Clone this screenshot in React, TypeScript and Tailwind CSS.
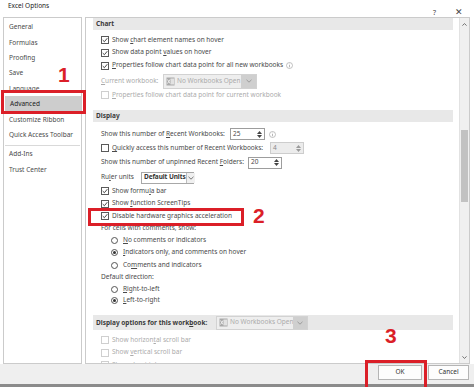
import React from "react";

type P = { h: string; checked?: boolean; disabled?: boolean; children: React.ReactNode };

function Box({ checked, disabled }: { checked?: boolean; disabled?: boolean }) {
  return (
    <span
      className={`w-[8px] h-[8px] shrink-0 border bg-white flex items-center justify-center ${
        disabled ? "border-[#cfcfcf]" : "border-[#5a5a5a]"
      }`}
    >
      {checked && (
        <svg width="6" height="6" viewBox="0 0 6 6">
          <path d="M0.7 3.1 L2.4 4.7 L5.3 1.2" stroke="#333" strokeWidth="0.9" fill="none" />
        </svg>
      )}
    </span>
  );
}

function CheckRow({ h, checked, disabled, children }: P) {
  return (
    <div
      className={`${h} shrink-0 flex items-center pl-[15px] gap-[3px] whitespace-nowrap ${
        disabled ? "text-[#ababab]" : ""
      }`}
    >
      <Box checked={checked} disabled={disabled} />
      <span className="leading-none">{children}</span>
    </div>
  );
}

function Radio({ h, on, children }: { h: string; on?: boolean; children: React.ReactNode }) {
  return (
    <div className={`${h} shrink-0 flex items-center pl-[25px] gap-[5px] whitespace-nowrap`}>
      <span className="w-[7px] h-[7px] shrink-0 rounded-full border border-[#555] bg-white flex items-center justify-center">
        {on && <span className="w-[3px] h-[3px] rounded-full bg-[#333]" />}
      </span>
      <span className="leading-none">{children}</span>
    </div>
  );
}

function Info() {
  return (
    <svg width="7" height="7" viewBox="0 0 7 7" className="shrink-0">
      <circle cx="3.5" cy="3.5" r="3" fill="none" stroke="#9a9a9a" strokeWidth="0.6" />
      <line x1="3.5" y1="3" x2="3.5" y2="5.3" stroke="#9a9a9a" strokeWidth="0.7" />
      <circle cx="3.5" cy="1.9" r="0.45" fill="#9a9a9a" />
    </svg>
  );
}

function XlIcon() {
  return (
    <svg width="9" height="9" viewBox="0 0 9 9" className="shrink-0">
      <rect x="0.5" y="0.5" width="8" height="8" fill="#a9a9a9" />
      <rect x="4.5" y="1.5" width="3.5" height="6" fill="#e2e2e2" />
      <path d="M1.5 2.5 L4 6.5 M4 2.5 L1.5 6.5" stroke="#f4f4f4" strokeWidth="0.9" />
    </svg>
  );
}

function Spin({ value, w, disabled }: { value: string; w: string; disabled?: boolean }) {
  return (
    <div
      className={`${w} h-[12px] shrink-0 border flex items-stretch ${
        disabled ? "border-[#cdcdcd] bg-[#ececec] text-[#8a8a8a]" : "border-[#9d9d9d] bg-white"
      }`}
    >
      <span className="flex-1 pl-[2px] flex items-center leading-none">{value}</span>
      <span className="w-[9px] flex flex-col items-center justify-center gap-[1px]">
        <svg width="5" height="3" viewBox="0 0 5 3">
          <path d="M0 3 L2.5 0 L5 3 Z" fill={disabled ? "#9a9a9a" : "#444"} />
        </svg>
        <svg width="5" height="3" viewBox="0 0 5 3">
          <path d="M0 0 L2.5 3 L5 0 Z" fill={disabled ? "#9a9a9a" : "#444"} />
        </svg>
      </span>
    </div>
  );
}

function Chevron({ color = "#555" }: { color?: string }) {
  return (
    <svg width="6" height="4" viewBox="0 0 6 4">
      <path d="M0.5 0.8 L3 3.2 L5.5 0.8" stroke={color} strokeWidth="0.8" fill="none" />
    </svg>
  );
}

function Header({ h, children }: { h: string; children: React.ReactNode }) {
  return (
    <div
      className={`${h} shrink-0 ml-[7px] mr-[6px] bg-[#e8e8e8] flex items-center pl-[3px] font-bold text-[#3a3a3a] whitespace-nowrap`}
    >
      {children}
    </div>
  );
}

const navItems = [
  "General",
  "Formulas",
  "Proofing",
  "Save",
  "Language",
  "Advanced",
  "Customize Ribbon",
  "Quick Access Toolbar",
];

export default function App() {
  return (
    <div className="w-[474px] h-[387px] bg-white relative overflow-hidden flex flex-col font-['Noto_Sans',sans-serif] text-[6.5px] text-[#4a4a4a]">
      {/* title bar */}
      <div className="h-[17px] shrink-0 flex">
        <div className="pl-[8px] pt-[1px] leading-[9px] text-[#222]">Excel Options</div>
        <div className="ml-auto flex items-end pb-[1px] gap-[19px] pr-[11px] text-[#444]">
          <span className="text-[7px] leading-none">?</span>
          <span className="text-[9px] leading-none">✕</span>
        </div>
      </div>

      {/* body */}
      <div className="h-[347px] shrink-0 flex pl-[3px] gap-[3px]">
        {/* nav */}
        <div className="w-[79px] border border-[#cbcbcb] bg-white flex flex-col pt-[1.5px] text-[#4a4a4a]">
          {navItems.map((n) => (
            <div
              key={n}
              className={`h-[15.4px] shrink-0 flex items-center pl-[5px] whitespace-nowrap ${
                n === "Advanced" ? "bg-[#cdcdcd] ml-[1px] pl-[4px] text-[#222]" : ""
              }`}
            >
              {n}
            </div>
          ))}
          <div className="mt-[2px] mb-[1px] mx-[1px] h-[1px] shrink-0 bg-[#d9d9d9]" />
          <div className="h-[15.4px] shrink-0 flex items-center pl-[5px]">Add-Ins</div>
          <div className="h-[15.4px] shrink-0 flex items-center pl-[5px]">Trust Center</div>
        </div>

        {/* options */}
        <div className="w-[385px] border border-[#cbcbcb] bg-white flex">
          <div className="flex-1 overflow-hidden flex flex-col">
            <Header h="h-[12px]">Chart</Header>
            <div className="h-[4px] shrink-0" />
            <CheckRow h="h-[12px]" checked>
              Show <u>c</u>hart element names on hover
            </CheckRow>
            <CheckRow h="h-[13px]" checked>
              Show data point <u>v</u>alues on hover
            </CheckRow>
            <div className="h-[13px] shrink-0 flex items-center pl-[15px] gap-[3px] whitespace-nowrap">
              <Box checked />
              <span className="leading-none">
                <u>P</u>roperties follow chart data point for all new workbooks
              </span>
              <Info />
            </div>
            <div className="h-[1px] shrink-0" />
            <div className="h-[16px] shrink-0 flex items-center pl-[15px] whitespace-nowrap text-[#ababab]">
              <span className="w-[62px] leading-none">
                <u>C</u>urrent workbook:
              </span>
              <div className="w-[94px] h-[15px] border border-[#d2d2d2] bg-[#eeeeee] flex items-center">
                <span className="pl-[2px] pr-[2px]">
                  <XlIcon />
                </span>
                <span className="flex-1 leading-none">No Workbooks Open</span>
                <span className="w-[15px] h-full bg-[#cfcfcf] flex items-center justify-center">
                  <Chevron color="#8e8e8e" />
                </span>
              </div>
            </div>
            <CheckRow h="h-[12px]" disabled>
              <u>P</u>roperties follow chart data point for current workbook
            </CheckRow>

            <div className="h-[9px] shrink-0" />
            <Header h="h-[12px]">Display</Header>
            <div className="h-[5px] shrink-0" />
            <div className="h-[14px] shrink-0 flex items-center pl-[15px] whitespace-nowrap">
              <span className="w-[129px] leading-none">
                Show this number of <u>R</u>ecent Workbooks:
              </span>
              <Spin value="25" w="w-[35px]" />
              <span className="ml-[4px]">
                <Info />
              </span>
            </div>
            <div className="h-[14px] shrink-0 flex items-center pl-[15px] gap-[3px] whitespace-nowrap">
              <Box />
              <span className="w-[155px] leading-none">
                <u>Q</u>uickly access this number of Recent Workbooks:
              </span>
              <Spin value="4" w="w-[34px]" disabled />
            </div>
            <div className="h-[15px] shrink-0 flex items-center pl-[15px] whitespace-nowrap">
              <span className="w-[147px] leading-none">
                Show this number of unpinned Recent <u>F</u>olders:
              </span>
              <Spin value="20" w="w-[34px]" />
            </div>
            <div className="h-[15px] shrink-0 flex items-center pl-[15px] whitespace-nowrap">
              <span className="w-[40px] leading-none">
                Ru<u>l</u>er units
              </span>
              <div className="w-[53px] h-[12px] border border-[#a8a8a8] bg-white flex items-center">
                <span className="flex-1 pl-[2px] font-bold leading-none text-[#333] tracking-[-0.1px]">
                  Default Units
                </span>
                <span className="w-[9px] h-full shrink-0 border-l border-[#bdbdbd] bg-[#f0f0f0] flex items-center justify-center">
                  <Chevron />
                </span>
              </div>
            </div>
            <CheckRow h="h-[12px]" checked>
              Show formu<u>l</u>a bar
            </CheckRow>
            <CheckRow h="h-[13px]" checked>
              Show <u>f</u>unction ScreenTips
            </CheckRow>
            <CheckRow h="h-[12px]" checked>
              Disable hardware <u>g</u>raphics acceleration
            </CheckRow>
            <div className="h-[12px] shrink-0 flex items-center pl-[15px] whitespace-nowrap leading-none">
              For cells with comments, show:
            </div>
            <Radio h="h-[12px]">
              <u>N</u>o comments or indicators
            </Radio>
            <Radio h="h-[13px]" on>
              <u>I</u>ndicators only, and comments on hover
            </Radio>
            <Radio h="h-[12px]">
              Co<u>m</u>ments and indicators
            </Radio>
            <div className="h-[12px] shrink-0 flex items-center pl-[15px] whitespace-nowrap leading-none">
              Default direction:
            </div>
            <Radio h="h-[12px]">
              <u>R</u>ight-to-left
            </Radio>
            <Radio h="h-[11px]" on>
              <u>L</u>eft-to-right
            </Radio>

            <div className="h-[9px] shrink-0" />
            <Header h="h-[15px]">
              <span className="w-[120px]">
                Display options for this work<u>b</u>ook:
              </span>
              <div className="w-[92px] h-[14px] border border-[#d2d2d2] bg-[#eeeeee] flex items-center font-normal text-[#ababab]">
                <span className="pl-[2px] pr-[2px]">
                  <XlIcon />
                </span>
                <span className="flex-1 leading-none">No Workbooks Open</span>
                <span className="w-[15px] h-full bg-[#cfcfcf] flex items-center justify-center">
                  <Chevron color="#8e8e8e" />
                </span>
              </div>
            </Header>
            <div className="h-[4px] shrink-0" />
            <CheckRow h="h-[12px]" disabled>
              Show horizon<u>t</u>al scroll bar
            </CheckRow>
            <CheckRow h="h-[13px]" disabled>
              Show <u>v</u>ertical scroll bar
            </CheckRow>
            <CheckRow h="h-[12px]" disabled>
              Show sheet tabs
            </CheckRow>
          </div>

          {/* scrollbar */}
          <div className="w-[10px] shrink-0 bg-[#f0f0f0] border-l border-[#e2e2e2] flex flex-col">
            <div className="h-[12px] shrink-0 flex items-center justify-center">
              <svg width="5" height="3" viewBox="0 0 5 3">
                <path d="M0.4 2.6 L2.5 0.6 L4.6 2.6" stroke="#555" strokeWidth="0.8" fill="none" />
              </svg>
            </div>
            <div className="mt-[100px] h-[72px] shrink-0 mx-[1px] bg-[#c2c2c2]" />
            <div className="mt-auto h-[12px] shrink-0 flex items-center justify-center">
              <svg width="5" height="3" viewBox="0 0 5 3">
                <path d="M0.4 0.4 L2.5 2.4 L4.6 0.4" stroke="#555" strokeWidth="0.8" fill="none" />
              </svg>
            </div>
          </div>
        </div>
      </div>

      {/* footer */}
      <div className="flex-1 bg-[#efefef] flex justify-end items-start pt-[1px] pr-[5px] gap-[6px]">
        <button className="w-[44px] h-[15px] bg-[#fdfdfd] border border-[#b5b5b5] text-[6.5px] text-[#333] leading-none">
          OK
        </button>
        <button className="w-[41px] h-[15px] bg-[#fdfdfd] border border-[#b5b5b5] text-[6.5px] text-[#333] leading-none">
          Cancel
        </button>
      </div>
      <div className="h-[3px] shrink-0 bg-[#8b8b8b]" />

      {/* annotations */}
      <div className="absolute left-[1px] top-[90px] w-[85px] h-[24px] border-[3px] border-[#db1f28]" />
      <div className="absolute left-[58px] top-[64px] font-['Liberation_Sans',sans-serif] font-bold text-[21px] leading-none text-[#db1f28]">
        1
      </div>
      <div className="absolute left-[88px] top-[208px] w-[156px] h-[18px] border-[3px] border-[#db1f28]" />
      <div className="absolute left-[253px] top-[205px] font-['Liberation_Sans',sans-serif] font-bold text-[21px] leading-none text-[#db1f28]">
        2
      </div>
      <div className="absolute left-[365px] top-[360px] w-[62px] h-[30px] border-[3px] border-[#db1f28]" />
      <div className="absolute left-[385px] top-[325px] font-['Liberation_Sans',sans-serif] font-bold text-[21px] leading-none text-[#db1f28]">
        3
      </div>
    </div>
  );
}
